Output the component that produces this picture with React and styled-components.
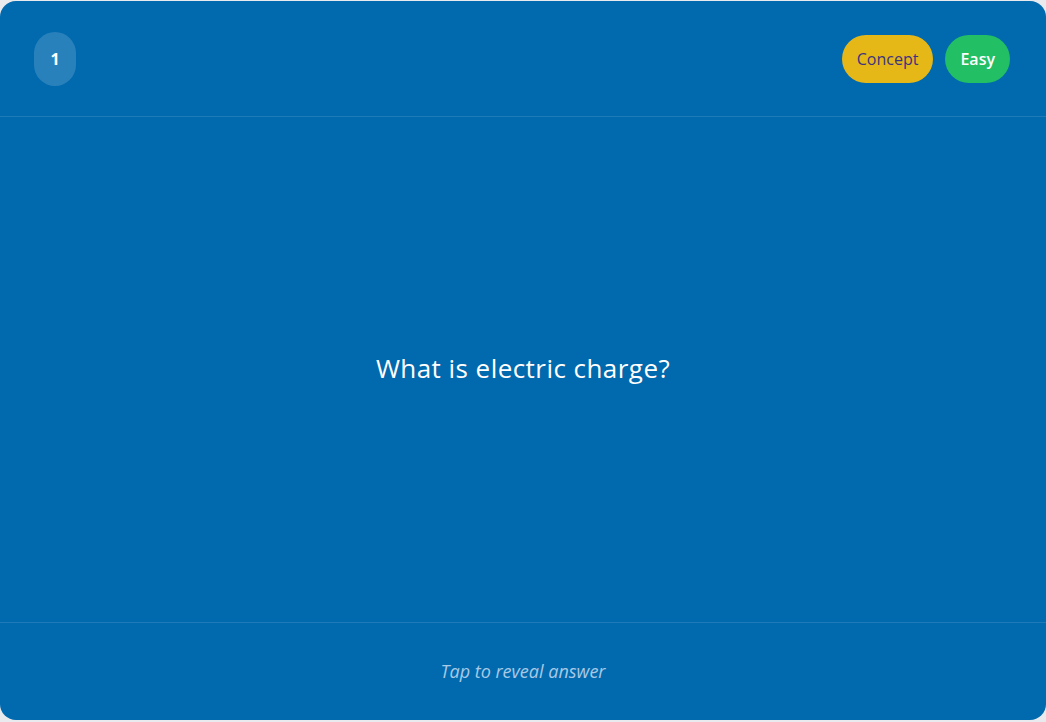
import React from "react";
import styled, { createGlobalStyle } from "styled-components";

const GlobalStyle = createGlobalStyle`
  html, body { margin: 0; padding: 0; background: #e8eaee; }
  body { font-family: "Open Sans", "Noto Sans", sans-serif; }
  #root { padding-top: 1px; }
`;

const Card = styled.div`
  width: 1046px;
  height: 719px;
  background: #0169ae;
  border-radius: 16px;
  display: flex;
  flex-direction: column;
  overflow: hidden;
  box-sizing: border-box;
`;

const Header = styled.div`
  height: 116px;
  display: flex;
  align-items: center;
  justify-content: space-between;
  padding: 0 36px 0 34px;
  border-bottom: 1px solid rgba(255, 255, 255, 0.12);
  box-sizing: border-box;
  flex-shrink: 0;
`;

const Number = styled.div`
  width: 42px;
  height: 54px;
  border-radius: 21px;
  background: rgba(255, 255, 255, 0.16);
  color: #fff;
  font-weight: 700;
  font-size: 16px;
  display: flex;
  align-items: center;
  justify-content: center;
  margin-top: 1px;
`;

const Tags = styled.div`
  display: flex;
  gap: 12px;
  margin-top: 1px;
`;

const Tag = styled.div`
  height: 48px;
  padding: 0 15px;
  border-radius: 24px;
  background: ${(p) => p.$bg};
  color: ${(p) => p.$fg};
  font-size: 16px;
  font-weight: ${(p) => p.$weight};
  display: flex;
  align-items: center;
`;

const Body = styled.div`
  flex: 1;
  display: flex;
  align-items: center;
  justify-content: center;
  color: #fff;
  font-size: 26px;
  letter-spacing: 0.45px;
  border-bottom: 1px solid rgba(255, 255, 255, 0.12);
  padding-bottom: 4px;
`;

const Footer = styled.div`
  height: 97px;
  display: flex;
  align-items: center;
  justify-content: center;
  color: #a9c9e6;
  font-style: italic;
  font-size: 18px;
  padding-bottom: 2px;
  box-sizing: border-box;
  flex-shrink: 0;
`;

export default function App() {
  return (
    <>
      <GlobalStyle />
      <Card>
        <Header>
          <Number>1</Number>
          <Tags>
            <Tag $bg="#e6b817" $fg="#3b3380" $weight={400}>Concept</Tag>
            <Tag $bg="#22bf64" $fg="#ffffff" $weight={600}>Easy</Tag>
          </Tags>
        </Header>
        <Body>What is electric charge?</Body>
        <Footer>Tap to reveal answer</Footer>
      </Card>
    </>
  );
}
